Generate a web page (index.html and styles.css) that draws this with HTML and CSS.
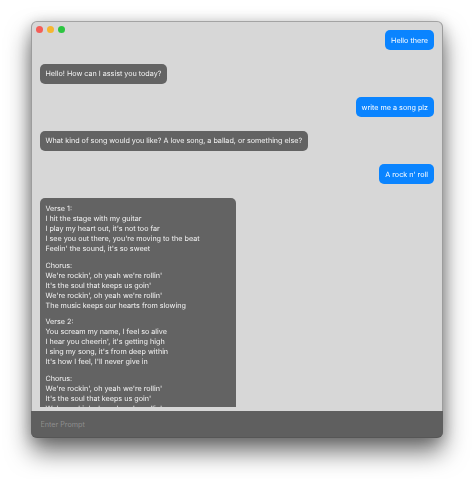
FILE: index.html
```html
<!DOCTYPE html>
<html lang="en">
<head>
<meta charset="UTF-8">
<meta name="viewport" content="width=device-width, initial-scale=1.0">
<title>Chat</title>
<link rel="stylesheet" href="styles.css">
</head>
<body>

<div class="window">
  <div class="lights">
    <span class="light red"></span>
    <span class="light yellow"></span>
    <span class="light green"></span>
  </div>

  <div class="messages">
    <div class="bubble user">Hello there</div>
    <div class="bubble bot">Hello! How can I assist you today?</div>
    <div class="bubble user">write me a song plz</div>
    <div class="bubble bot">What kind of song would you like? A love song, a ballad, or something else?</div>
    <div class="bubble user">A rock n' roll</div>
    <div class="bubble bot song">
      <p>Verse 1:<br>I hit the stage with my guitar<br>I play my heart out, it's not too far<br>I see you out there, you're moving to the beat<br>Feelin' the sound, it's so sweet</p>
      <p>Chorus:<br>We're rockin', oh yeah we're rollin'<br>It's the soul that keeps us goin'<br>We're rockin', oh yeah we're rollin'<br>The music keeps our hearts from slowing</p>
      <p>Verse 2:<br>You scream my name, I feel so alive<br>I hear you cheerin', it's getting high<br>I sing my song, it's from deep within<br>It's how I feel, I'll never give in</p>
      <p>Chorus:<br>We're rockin', oh yeah we're rollin'<br>It's the soul that keeps us goin'<br>We're rockin', oh yeah we're rollin'<br>The music keeps our hearts from slowing</p>
    </div>
  </div>

  <input class="prompt" type="text" placeholder="Enter Prompt">
</div>

</body>
</html>
```

FILE: styles.css
```css
body {
  box-sizing: border-box;
  min-height: 100vh;
  margin: 0;
  padding: 21px 0 0 31px;
  font-family: Inter, "Liberation Sans", sans-serif;
  text-rendering: geometricPrecision;
  background-color: #fff;
}
.window {
  position: relative;
  display: flex;
  flex-direction: column;
  box-sizing: border-box;
  width: 412px;
  height: 417px;
  border-radius: 6px;
  background-color: #d7d7d7;
  border-top: 1px solid #a3a3a3;
  border-left: 1px solid #9c9c9c;
  border-right: 1px solid #9c9c9c;
  box-shadow: 0 14px 24px rgba(0, 0, 0, 0.55), 0 2px 14px rgba(0, 0, 0, 0.2);
}
.lights {
  position: absolute;
  top: 4px;
  left: 4px;
  display: flex;
  gap: 4px;
}
.light {
  width: 7px;
  height: 7px;
  border-radius: 50%;
}
.red {
  background-color: #f45d57;
}
.yellow {
  background-color: #f6b62f;
}
.green {
  background-color: #2cc540;
}
.messages {
  flex: 1;
  min-height: 0;
  display: flex;
  flex-direction: column;
  align-items: flex-start;
  gap: 13.5px;
  padding: 8px 8px 0 8px;
  margin-bottom: 4px;
  overflow: hidden;
  filter: blur(0.3px);
}
.bubble {
  flex-shrink: 0;
  box-sizing: border-box;
  padding: 5.5px 5.5px 4.5px;
  border-radius: 5px;
  font-size: 7.2px;
  line-height: 10px;
  color: #f4f4f4;
  background-color: #636363;
}
.user {
  align-self: flex-end;
  padding-left: 6px;
  padding-right: 6px;
  color: #fff;
  background-color: #0a84ff;
}
.song {
  width: 196px;
  padding-top: 6.5px;
}
.song p {
  margin: 0 0 6.5px 0;
}
.prompt {
  flex-shrink: 0;
  box-sizing: border-box;
  width: 412px;
  height: 27px;
  margin-left: -1px;
  padding: 0 9.5px;
  border: 0;
  border-bottom: 1px solid #565656;
  border-radius: 0 0 6px 6px;
  outline: 0;
  font-family: inherit;
  font-size: 7.2px;
  color: #eee;
  background-color: #5f5f5f;
}
.prompt::placeholder {
  color: #8e8e8e;
}
```
